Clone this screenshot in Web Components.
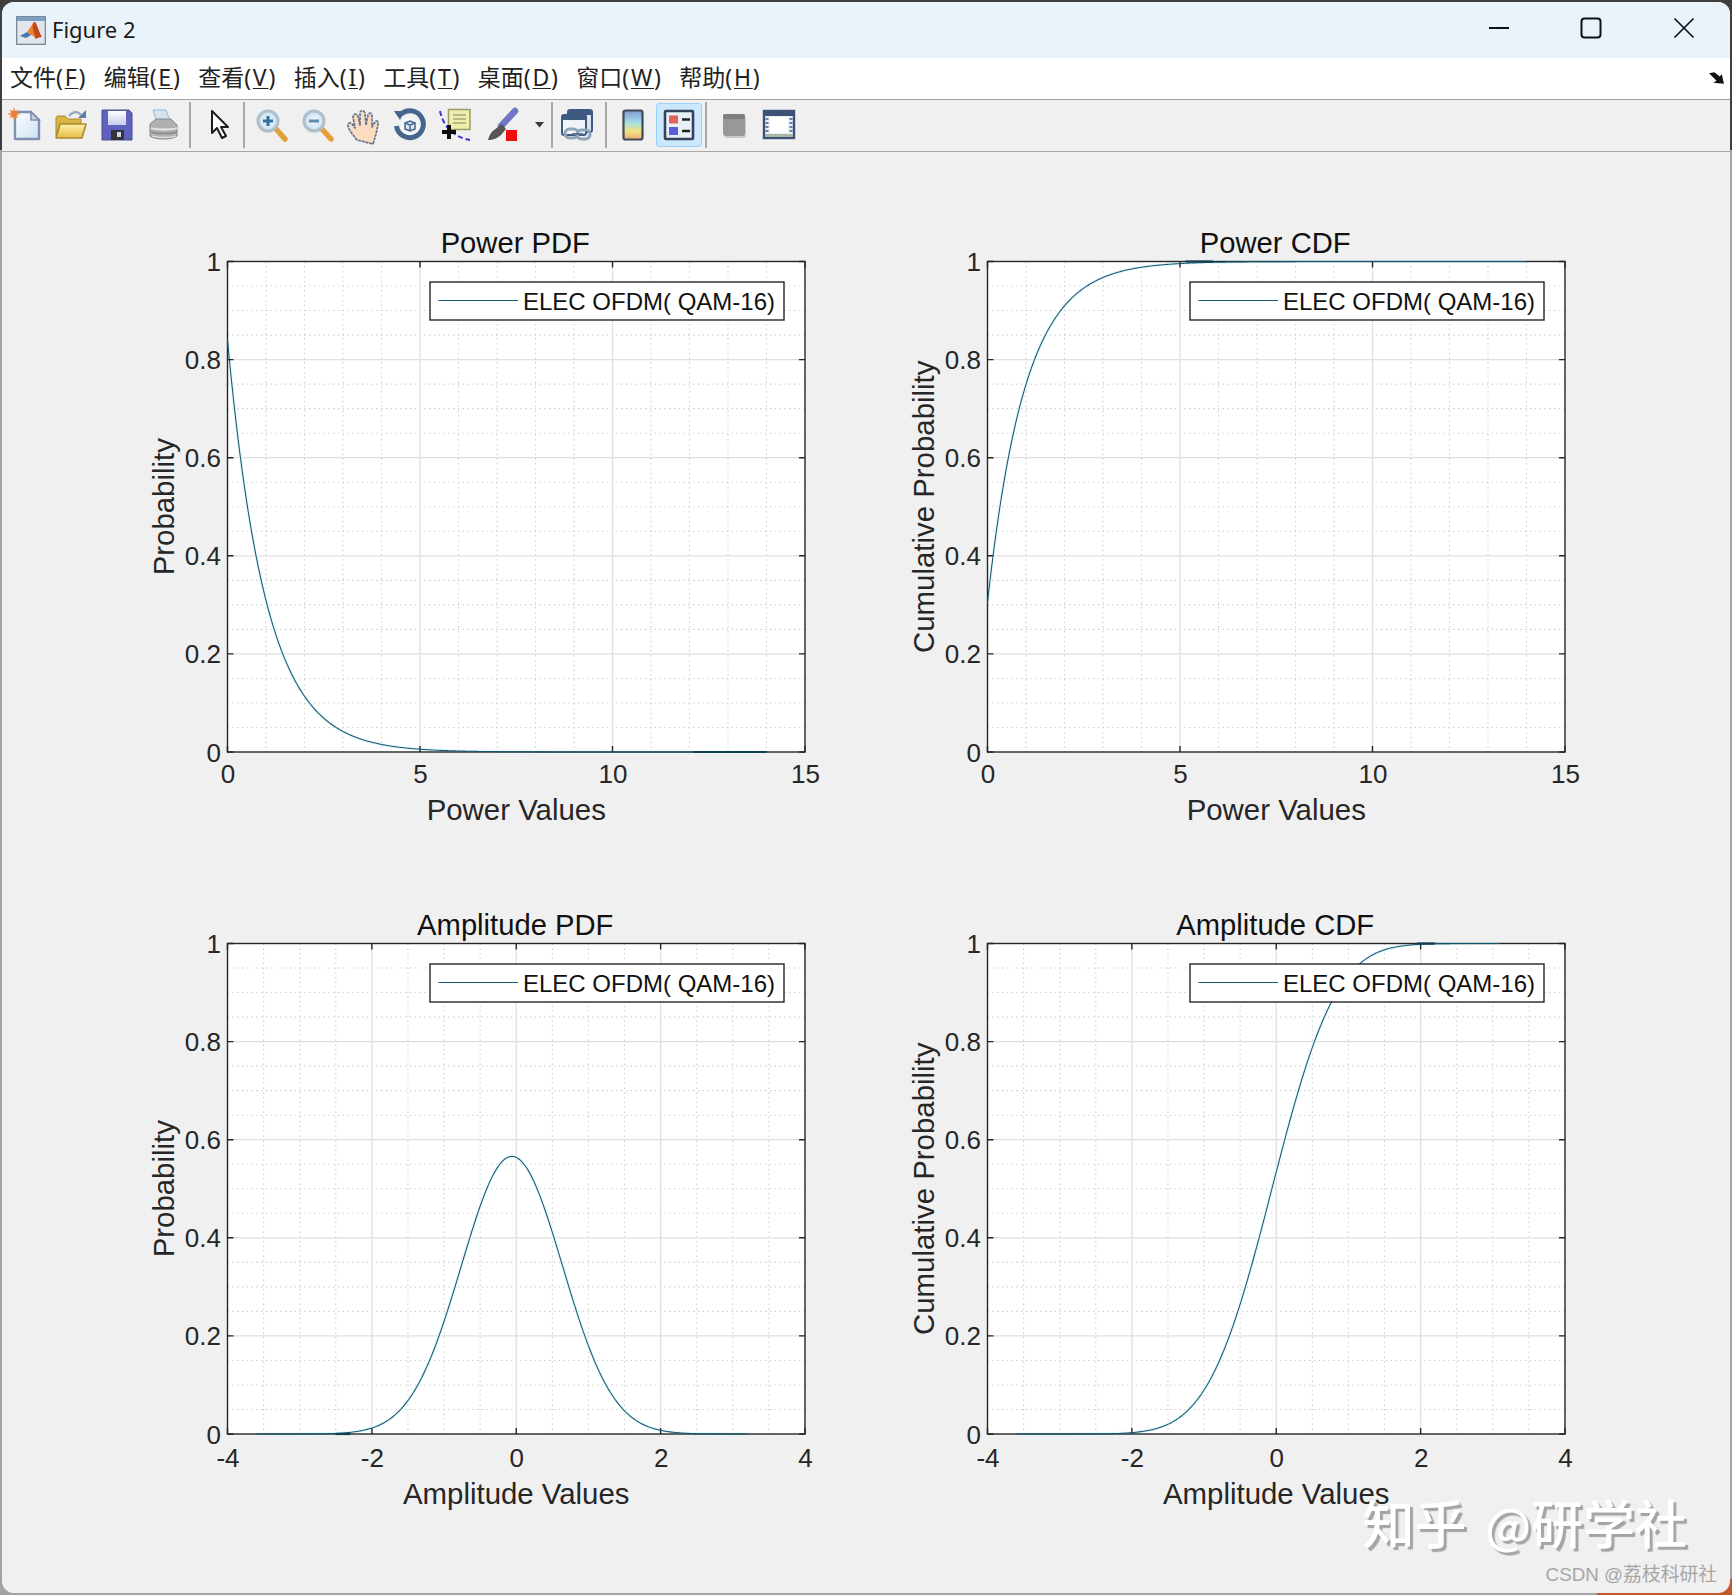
<!DOCTYPE html>
<html lang="zh"><head><meta charset="utf-8"><title>Figure 2</title>
<style>
html,body{margin:0;padding:0}
body{width:1732px;height:1595px;overflow:hidden;
background:
 linear-gradient(#c4582c,#c4582c) right bottom/135px 16px no-repeat,
 linear-gradient(#3f3f3f 0 150px,#a3a3a3 150px);}
</style></head><body>
<fig-window>
  <title-bar slot="head" label="Figure 2"></title-bar>
  <menu-bar slot="head">
    <menu-item cn="文件" key="F"></menu-item>
    <menu-item cn="编辑" key="E"></menu-item>
    <menu-item cn="查看" key="V"></menu-item>
    <menu-item cn="插入" key="I"></menu-item>
    <menu-item cn="工具" key="T"></menu-item>
    <menu-item cn="桌面" key="D"></menu-item>
    <menu-item cn="窗口" key="W"></menu-item>
    <menu-item cn="帮助" key="H"></menu-item>
  </menu-bar>
  <tool-bar slot="head">
    <tool-icon name="new"></tool-icon><tool-icon name="open"></tool-icon><tool-icon name="save"></tool-icon><tool-icon name="print"></tool-icon>
    <tool-sep></tool-sep>
    <tool-icon name="pointer"></tool-icon>
    <tool-sep></tool-sep>
    <tool-icon name="zoomin"></tool-icon><tool-icon name="zoomout"></tool-icon><tool-icon name="hand"></tool-icon><tool-icon name="rotate"></tool-icon><tool-icon name="cursor"></tool-icon><tool-icon name="brush"></tool-icon><tool-icon name="drop" narrow></tool-icon>
    <tool-sep></tool-sep>
    <tool-icon name="link"></tool-icon>
    <tool-sep></tool-sep>
    <tool-icon name="colorbar"></tool-icon><tool-icon name="legend" active></tool-icon>
    <tool-sep></tool-sep>
    <tool-icon name="grey"></tool-icon><tool-icon name="plottools"></tool-icon>
  </tool-bar>
  <plot-grid>
    <fig-plot tight heading="Power PDF" xlabel="Power Values" ylabel="Probability" curve="ppdf"></fig-plot>
    <fig-plot tight heading="Power CDF" xlabel="Power Values" ylabel="Cumulative Probability" curve="pcdf"></fig-plot>
    <fig-plot heading="Amplitude PDF" xlabel="Amplitude Values" ylabel="Probability" curve="apdf"></fig-plot>
    <fig-plot heading="Amplitude CDF" xlabel="Amplitude Values" ylabel="Cumulative Probability" curve="acdf"></fig-plot>
  </plot-grid>
  <water-mark></water-mark>
</fig-window>
<script>
const SANS='"Liberation Sans","Noto Sans CJK SC",sans-serif';
const UI='"Noto Sans","Noto Sans CJK SC",sans-serif';
function define(name,css,html){
  customElements.define(name,class extends HTMLElement{
    constructor(){super();this.attachShadow({mode:'open'});}
    connectedCallback(){
      const h=typeof html==='function'?html(this):html;
      this.shadowRoot.innerHTML='<style>'+css+'</style>'+h;
    }
  });
}
define('fig-window',
 ':host{display:flex;flex-direction:column;position:relative;box-sizing:border-box;margin:2px;height:1591px;background:#f0f0f0;border-radius:12px;overflow:hidden}',
 '<slot name="head"></slot><slot></slot>');

define('title-bar',
 ':host{display:flex;align-items:center;height:56px;background:#e9f3f9;font:22px '+UI+';color:#1a1a1a;flex:none}'+
 '.logo{width:30px;height:29px;margin:0 6px 0 14px;flex:none}.t{flex:1;position:relative;top:-1px}'+
 '.b{width:92px;height:52px;display:flex;align-items:center;justify-content:center;flex:none;margin:0 0 4px 0}.b:nth-of-type(2),.b:nth-of-type(3){padding-right:3px;width:89px}',
 t=>`<svg class="logo" viewBox="0 0 30 29">
  <rect x=".7" y=".7" width="28.6" height="27.6" fill="#e2e6ec" stroke="#6f7f92" stroke-width="1.2"/>
  <rect x="1" y="1" width="28" height="4" fill="#7e9fc4"/>
  <path d="M4 20l7-4 4 3-5 3z" fill="#3f78b5"/>
  <path d="M11 16l5-7c1-2 2-3 3-3 2 1 4 11 7 15-3-1-4 0-6 2-2-2-3-4-5-4z" fill="#e8842f"/>
  <path d="M17 7c-1 3 0 8 3 16 1-1 3-2 6-2-3-4-5-13-7-15z" fill="#c4491f"/>
 </svg><span class="t">${t.getAttribute('label')}</span>
 <span class="b"><svg width="22" height="4"><path d="M1 2h20" stroke="#111" stroke-width="2"/></svg></span>
 <span class="b"><svg width="22" height="22"><rect x="1.5" y="1.500" width="19" height="19" rx="3" fill="none" stroke="#111" stroke-width="2"/></svg></span>
 <span class="b"><svg width="22" height="22"><path d="M1.500 1.500l19 19M20.500 1.500l-19 19" stroke="#111" stroke-width="1.7"/></svg></span>`);

define('menu-bar',
 ':host{display:flex;align-items:center;box-sizing:border-box;height:42px;background:#fff;border-bottom:1.5px solid #a3a3a3;padding:0 0 2px 8px;gap:16.5px;position:relative;flex:none}'+
 'svg{position:absolute;right:5px;top:13px}',
 '<slot></slot><svg width="17" height="14" viewBox="0 0 16 13"><path d="M1 2l5-1 5 4 2-2 2 9-10-1 3-2z" fill="#111"/></svg>');

define('menu-item',
 ':host{display:block;font:23px/1 '+UI+';color:#222;white-space:nowrap}'+
 '.l{letter-spacing:1.8px}u{text-underline-offset:2px;text-decoration-thickness:1px}',
 m=>`${m.getAttribute('cn')}<span class="l">(<u>${m.getAttribute('key')}</u>)</span>`);

define('tool-bar',
 ':host{display:flex;align-items:center;box-sizing:border-box;height:52px;background:#f0f0f0;border-bottom:1.5px solid #a9a9a9;padding-bottom:1px;flex:none}',
 '<slot></slot>');

define('tool-sep',
 ':host{display:block;width:8px;height:46px;flex:none;position:relative}'+
 'i{position:absolute;left:3.2px;top:0;bottom:0;width:1.5px;background:#a8a8a8}',
 '<i></i>');

const SHIFT={pointer:[-2,0],brush:[-2,0],drop:[-3,0],link:[2,0]};
const ICONS={
new:`<defs><linearGradient id="g" x1="0" y1="0" x2="1" y2="1"><stop offset="0" stop-color="#fff"/><stop offset="1" stop-color="#cbe0f4"/></linearGradient></defs>
 <path d="M6 3h16l8 8v19H6z" fill="url(#g)" stroke="#7e90b2" stroke-width="2.4" stroke-linejoin="round"/><path d="M22 3v8h8z" fill="#c8d4e6" stroke="#7e90b2" stroke-width="1.6"/>
 <path d="M5 -1v12M-1 5h12M1 1l8 8M9 1l-8 8" stroke="#f2a060" stroke-width="1.5"/><circle cx="5" cy="5" r="3.4" fill="#ef7d34"/>`,
open:`<defs><linearGradient id="g" x1="0" y1="0" x2="0" y2="1"><stop offset="0" stop-color="#fff2a6"/><stop offset="1" stop-color="#e4bb45"/></linearGradient></defs>
 <path d="M1 27V9c0-1 1-2 2-2h7l3 3h13v6H5z" fill="#d8b545" stroke="#a98a2e"/><path d="M1 29l4-14h26l-4 14z" fill="url(#g)" stroke="#a98a2e" stroke-width="1.6" stroke-linejoin="round"/>
 <path d="M14 7c4-5 9-5 12-1" stroke="#98a8ba" stroke-width="2.2" fill="none"/><path d="M31 1v8h-8z" fill="#5f7ea6"/>`,
save:`<defs><linearGradient id="g" x1="0" y1="0" x2="0" y2="1"><stop offset="0" stop-color="#fff"/><stop offset="1" stop-color="#c7cdec"/></linearGradient></defs>
 <path d="M1 1h27l3 3v27H1z" fill="#5f62bd" stroke="#46518c"/><rect x="7" y="2" width="18" height="14" fill="url(#g)"/>
 <rect x="10" y="21" width="13" height="10" fill="#33343c"/><rect x="16" y="23" width="4" height="5" fill="#d8d8e4"/>`,
print:`<path d="M6 1h13l5 13H10z" fill="#d2e4f0" stroke="#a3b6c4"/><path d="M3 15l6-5h15l6 6v11c-4 4-23 4-27 0z" fill="#b0b0b0" stroke="#868686"/>
 <path d="M4 19c6 2 20 2 26 0" stroke="#e8e8e8" stroke-width="1.8" fill="none"/><path d="M4 23c6 2 20 2 26 0" stroke="#8a8a8a" stroke-width="1.5" fill="none"/><path d="M5 27c6 2 18 2 24 0" stroke="#dedede" stroke-width="1.3" fill="none"/>`,
pointer:`<path d="M9 2v22l5-5 5 10 4-2-5-9h7z" fill="#fff" stroke="#1d1d1d" stroke-width="2" stroke-linejoin="round"/>`,
zoomin:`<defs><radialGradient id="g"><stop offset="0" stop-color="#f3f9fd"/><stop offset="1" stop-color="#c9dff0"/></radialGradient></defs>
 <path d="M21 20l9 10" stroke="#e2a03c" stroke-width="5.5" stroke-linecap="round"/><circle cx="13" cy="12" r="10" fill="url(#g)" stroke="#aebfca" stroke-width="3"/>
 <path d="M13 7v10M8 12h10" stroke="#2f6fa8" stroke-width="3"/>`,
zoomout:`<defs><radialGradient id="g"><stop offset="0" stop-color="#f3f9fd"/><stop offset="1" stop-color="#c9dff0"/></radialGradient></defs>
 <path d="M21 20l9 10" stroke="#e2a03c" stroke-width="5.5" stroke-linecap="round"/><circle cx="13" cy="12" r="10" fill="url(#g)" stroke="#aebfca" stroke-width="3"/>
 <path d="M8 12h10" stroke="#5f8cab" stroke-width="3"/>`,
hand:`<path d="M10 31C7 27 1 21 1 16c0-2 3-3 4-1l3 4L6 8c0-3 4-4 5-1l2 9 0-12c0-3 4-3 5 0l1 12 2-10c1-3 4-2 4 1v11l3-5c1-2 4-1 3 2-1 6-2 11-5 20z" fill="#fbdcc0" stroke="#65748f" stroke-width="1.7" stroke-dasharray="3 .8" stroke-linejoin="round"/>`,
rotate:`<circle cx="17" cy="17" r="9.500" fill="#f2f5f8"/><path d="M8 5A13.500 13.500 0 1 1 3.500 17" fill="none" stroke="#46658c" stroke-width="5"/><path d="M1 2l11 0-5 9z" fill="#46658c"/>
 <path d="M12 14l5-2 5 2v6l-5 2-5-2zM12 14l5 2 5-2M17 16v6" fill="#dbe5ee" stroke="#46658c" stroke-width="1.5"/>`,
cursor:`<path d="M1 2c3 14 12 26 30 29" stroke="#3737d0" stroke-width="2" stroke-dasharray="5 3" fill="none"/>
 <rect x="9.500" y="0.500" width="21.500" height="20" fill="#f0ecaa" stroke="#9b9a6a" stroke-width="1.5"/><path d="M14 6h13M14 10h13M14 14h13" stroke="#a7a67d" stroke-width="1.7"/>
 <path d="M10 16v14M3 23h14" stroke="#0d0d0d" stroke-width="4"/>`,
brush:`<path d="M28 2L14 17" stroke="#7175c8" stroke-width="6.500" stroke-linecap="round"/><path d="M15 15l4 5-5 6c-3 3-8 5-13 5 1-4 3-8 6-10z" fill="#555"/>
 <rect x="19" y="21" width="11" height="11" fill="#f20d0d"/>`,
drop:`<path d="M4 13h9l-4.500 5.500z" fill="#3a3a3a"/>`,
link:`<rect x="7" y="1" width="24" height="22" rx="2" fill="#d9e4f0" stroke="#3f5a80" stroke-width="2"/><rect x="7" y="1" width="24" height="5" fill="#3f5a80"/>
 <rect x="1" y="6" width="24" height="20" rx="2" fill="#eff4f9" stroke="#3f5a80" stroke-width="2"/><rect x="1" y="6" width="24" height="5" fill="#3f5a80"/>
 <rect x="4" y="20" width="13" height="9" rx="4.500" fill="none" stroke="#8fa4ba" stroke-width="3"/><rect x="16" y="21" width="13" height="9" rx="4.500" fill="none" stroke="#8fa4ba" stroke-width="3"/><path d="M11 25h11" stroke="#5d7690" stroke-width="2"/>`,
colorbar:`<defs><linearGradient id="g" x1="0" y1="0" x2="0" y2="1"><stop offset="0" stop-color="#8397d6"/><stop offset=".4" stop-color="#9fdfe8"/><stop offset=".72" stop-color="#f2e37e"/><stop offset="1" stop-color="#f0a874"/></linearGradient></defs>
 <rect x="6.500" y="1.500" width="19" height="29" rx="2" fill="url(#g)" stroke="#3c4a5c" stroke-width="2.200"/>`,
legend:`<rect x="2" y="2" width="28" height="28" rx="1" fill="#e8f0f8" stroke="#33435a" stroke-width="2.600"/><rect x="6" y="6.500" width="9" height="8" fill="#e4605c"/><rect x="6" y="18" width="9" height="8" fill="#5a5cdc"/><path d="M19 10.500h8M19 22h8" stroke="#222" stroke-width="2.400"/>`,
grey:`<rect x="7" y="7" width="22" height="22" rx="3" fill="#c9c9c9"/><rect x="6" y="5" width="22" height="22" rx="3" fill="#989898"/><rect x="6" y="5" width="22" height="5" rx="2" fill="#7e7e7e"/>`,
plottools:`<rect x="1" y="2" width="30" height="27" fill="#e8eef5" stroke="#3c5078" stroke-width="2.400"/><rect x="1" y="2" width="30" height="5" fill="#3c5078"/><rect x="7" y="8" width="18" height="16" fill="#fff"/>
 <path d="M4 9v15M28 9v15" stroke="#6a7ea0" stroke-width="3" stroke-dasharray="2 2"/><rect x="2" y="25" width="28" height="3" fill="#a6b8a6"/>`
};
define('tool-icon',
 ':host{display:flex;align-items:center;justify-content:center;box-sizing:border-box;width:46px;height:44px;flex:none;border:1px solid transparent;border-radius:3px}'+
 ':host([active]){background:#cce8ff;border-color:#99d1ff}:host([narrow]){width:24px}'+
 'svg{width:32px;height:32px;display:block;overflow:visible;filter:blur(.45px)}:host([narrow]) svg{width:17px}',
 i=>{
  const n=i.getAttribute('name'),s=SHIFT[n]||[0,0];
  return `<svg viewBox="${s[0]} ${s[1]} ${i.hasAttribute('narrow')?17:32} 32">${ICONS[n]}</svg>`;
 });

define('plot-grid',
 ':host{display:grid;grid-template-columns:760px 760px;grid-auto-rows:682px;padding:38px 0 0 128px;flex:none}',
 '<slot></slot>');

function phi(z){let s=0,d=z/400;for(let i=0;i<400;i++){const u=(i+.5)*d;s+=Math.exp(-u*u/2)*d;}return .5+s/Math.sqrt(2*Math.PI);}
const CURVES={
 ppdf:{x:[0,15,5,5],f:x=>.84*Math.exp(-x),r:[0,14],thick:[12.1,14,0]},
 pcdf:{x:[0,15,5,5],f:x=>1-.695*Math.exp(-1.02*x),r:[0,14],thick:[5.15,5.85,1]},
 apdf:{x:[-4,4,2,4],f:x=>.566*Math.exp(-(x+.06)*(x+.06)/(2*.7*.7)),r:[-3.6,3.2],thick:[-2.5,-2.3,0]},
 acdf:{x:[-4,4,2,4],f:x=>phi((x+.06)/.7),r:[-3.6,3.1],thick:[1.95,2.2,1]}
};

define('fig-plot',
 ':host{display:block;width:760px;height:682px}svg{display:block;overflow:visible}'+
 'text{font-family:'+SANS+'}.tk{font-size:26px;fill:#262626}.lb{font-size:29.4px;fill:#262626}.ti{font-size:29.2px;fill:#111}.lg{font-size:24px;fill:#111}',
 p=>{
  const ax=97.5,ay=71.5,w=577.5,h=490.5;
  const td=p.hasAttribute('tight')?-1.6:0;
  const c=CURVES[p.getAttribute('curve')];
  const [x0,x1,st,mn]=c.x;
  const X=v=>ax+(v-x0)/(x1-x0)*w, Y=v=>ay+h-v*h;
  let minor='',major='',ticks='',labels='';
  const eps=1e-6;
  for(let v=x0;v<=x1+eps;v+=st/mn){
    const isM=Math.abs(((v-x0)/st)-Math.round((v-x0)/st))<eps;
    if(v>x0+eps&&v<x1-eps){
      if(isM) major+=`<path d="M${X(v)} ${ay}v${h}"/>`;
      else minor+=`<path d="M${X(v)} ${ay}v${h}"/>`;
    }
    if(isM){
      ticks+=`<path d="M${X(v)} ${ay+h}v-6M${X(v)} ${ay}v6"/>`;
      labels+=`<text class="tk" x="${X(v)+.5}" y="${ay+h+32.5+td}" text-anchor="middle">${Math.round(v)}</text>`;
    }
  }
  for(let i=0;i<=20;i++){
    const v=i/20;
    if(i>0&&i<20){
      if(i%4===0) major+=`<path d="M${ax} ${Y(v)}h${w}"/>`;
      else minor+=`<path d="M${ax} ${Y(v)}h${w}"/>`;
    }
    if(i%4===0){
      ticks+=`<path d="M${ax} ${Y(v)}h6M${ax+w} ${Y(v)}h-6"/>`;
      const s=i===0?'0':i===20?'1':String(v);
      labels+=`<text class="tk" x="${ax-6.5}" y="${Y(v)+9.5}" text-anchor="end">${s}</text>`;
    }
  }
  const pts=[];
  for(let i=0;i<=500;i++){const v=c.r[0]+(c.r[1]-c.r[0])*i/500;pts.push(X(v).toFixed(2)+','+Y(c.f(v)).toFixed(2));}
  const line=pts.join(' ');
  const th=c.thick;
  const lx=ax+w-375, ly=ay+20.5;
  return `<svg width="760" height="682" viewBox="0 0 760 682">
   <rect x="${ax}" y="${ay}" width="${w}" height="${h}" fill="#fff"/>
   <g stroke="#cdcdcd" stroke-width="1.1" stroke-dasharray="1.4 3.4" fill="none">${minor}</g>
   <g stroke="#dfdfdf" stroke-width="1.3" fill="none">${major}</g>
   <polyline points="${line}" fill="none" stroke="#e6f8fd" stroke-width="3.2"/>
   <rect x="${ax}" y="${ay}" width="${w}" height="${h}" fill="none" stroke="#262626" stroke-width="1.4"/>
   <g stroke="#262626" stroke-width="1.4" fill="none">${ticks}</g>
   <polyline points="${line}" fill="none" stroke="#17566f" stroke-width="1.05"/>
   <path d="M${X(th[0])} ${Y(th[2])}H${X(th[1])}" stroke="#123f50" stroke-width="2.200"/>
   ${labels}
   <text class="ti" x="${ax+w/2-1}" y="${ay-8.5}" text-anchor="middle">${p.getAttribute('heading')}</text>
   <text class="lb" x="${ax+w/2}" y="${ay+h+69.5+td*.7}" text-anchor="middle">${p.getAttribute('xlabel')}</text>
   <text class="lb" transform="translate(${ax-54} ${ay+h/2}) rotate(-90)" text-anchor="middle">${p.getAttribute('ylabel')}</text>
   <rect x="${lx}" y="${ly}" width="354" height="38" fill="#fff" stroke="#262626" stroke-width="1.4"/>
   <path d="M${lx+8.5} ${ly+18.5}h79.500" stroke="#17566f" stroke-width="1.05"/>
   <text class="lg" x="${lx+93}" y="${ly+27.5}">ELEC OFDM( QAM-16)</text>
  </svg>`;
 });

define('water-mark',
 ':host{display:block;position:absolute;inset:0;pointer-events:none}'+
 '.z{position:absolute;right:43px;bottom:39.5px;font:500 52px/60px "Noto Sans CJK SC",sans-serif;word-spacing:7px;color:#fff;text-shadow:3px 3px 1px #a4a4a4;white-space:nowrap}'+
 '.z span{font-size:47px}'+
 '.c{position:absolute;right:13px;bottom:6px;font:18.8px/24px '+SANS+';color:#a6a6a6;white-space:nowrap}',
 '<div class="z">知乎 <span>@</span>研学社</div><div class="c">CSDN @荔枝科研社</div>');
</script>
</body></html>
